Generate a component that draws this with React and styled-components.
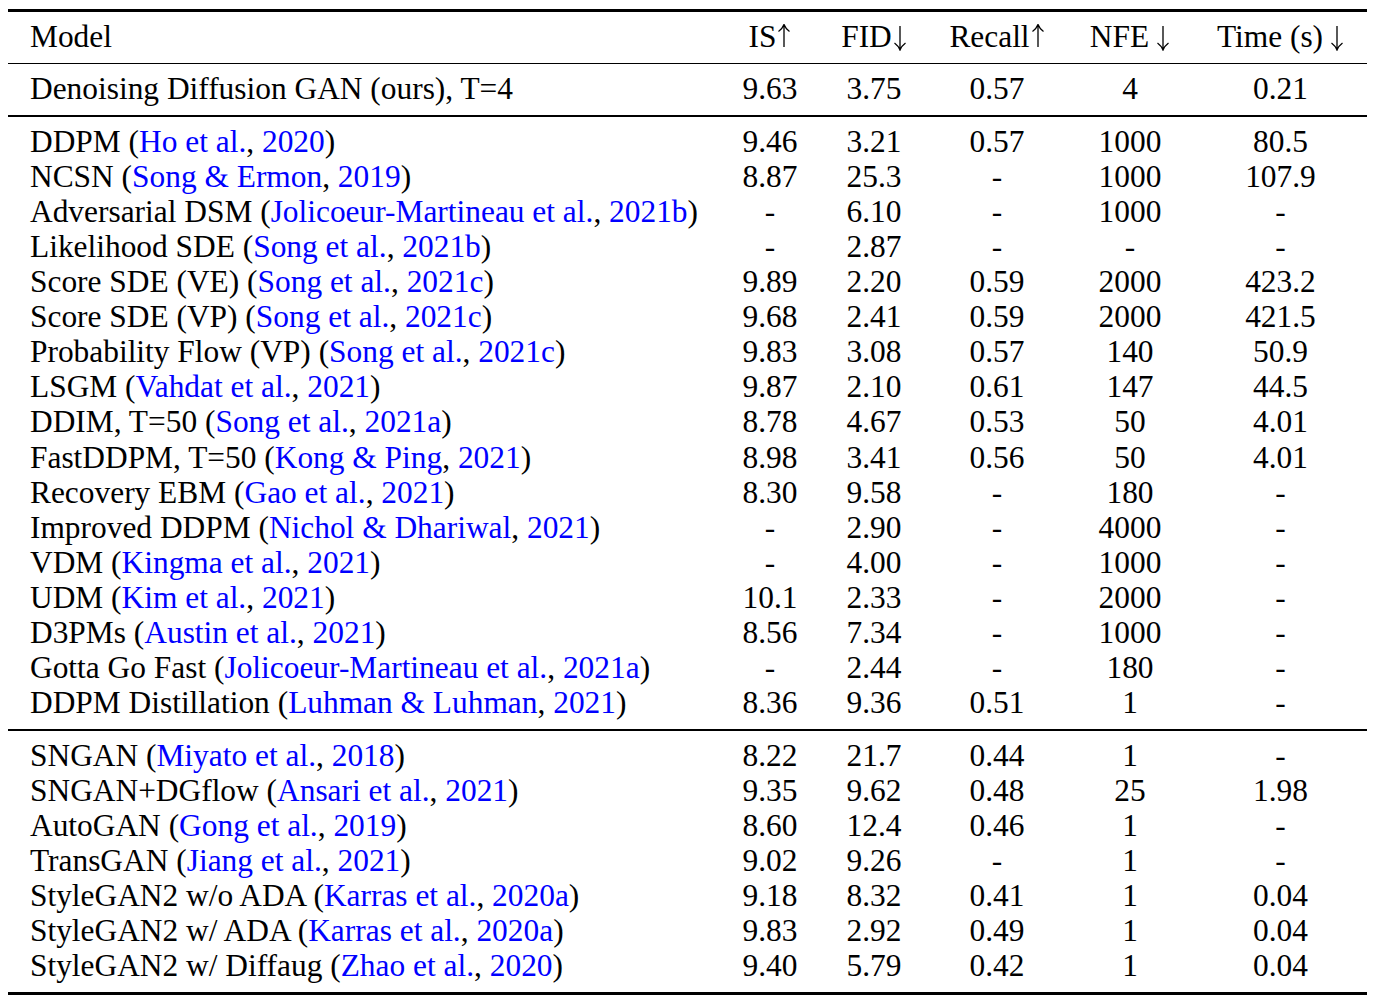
import React from 'react';
import styled, { createGlobalStyle } from 'styled-components';

const GlobalStyle = createGlobalStyle`
  body {
    margin: 0;
    background: #ffffff;
  }
`;

const Page = styled.div`
  padding: 9px 13px 0 8px;
  font-family: "Liberation Serif", "Times New Roman", serif;
  font-size: 31.4px;
  color: #000000;
`;

const Table = styled.div`
  width: 1359px;
`;

const Rule = styled.div`
  height: ${props => (props.$thick ? '2.5px' : '1.5px')};
  background: #000000;
`;

const Section = styled.div`
  padding: 7px 0 9px;
`;

const Row = styled.div`
  display: grid;
  grid-template-columns: 712px 100px 108px 138px 128px 173px;
  height: 35.1px;
  line-height: 35.1px;
  white-space: nowrap;
`;

const ModelCell = styled.div`
  padding-left: 22px;
`;

const NumCell = styled.div`
  text-align: center;
`;

const Link = styled.span`
  color: #0000ff;
`;

const ArrowSvg = styled.svg`
  width: 14px;
  height: ${props => (props.$down ? '25px' : '23px')};
  vertical-align: ${props => (props.$down ? '-4px' : '0px')};
  margin-left: ${props => (props.$gap ? '7px' : '1px')};
`;

const Arrow = ({ down, gap }) => (
  <ArrowSvg $down={down} $gap={gap} viewBox={down ? '0 0 14 25' : '0 0 14 23'}>
    {down ? (
      <path d="M7 0 V23.5 M1.5 17 Q5.5 20 7 24 Q8.5 20 12.5 17" stroke="#000" strokeWidth="1.3" fill="none" />
    ) : (
      <path d="M7 23 V1 M1.5 7.5 Q5.5 4.5 7 0.5 Q8.5 4.5 12.5 7.5" stroke="#000" strokeWidth="1.3" fill="none" />
    )}
  </ArrowSvg>
);

const header = [
  { label: 'IS', down: false, gap: false },
  { label: 'FID', down: true, gap: false },
  { label: 'Recall', down: false, gap: false },
  { label: 'NFE', down: true, gap: true },
  { label: 'Time (s)', down: true, gap: true },
];

const ours = { name: 'Denoising Diffusion GAN (ours), T=4', vals: ['9.63', '3.75', '0.57', '4', '0.21'] };

const diffusion = [
  { name: 'DDPM', who: 'Ho et al.', year: '2020', vals: ['9.46', '3.21', '0.57', '1000', '80.5'] },
  { name: 'NCSN', who: 'Song & Ermon', year: '2019', vals: ['8.87', '25.3', '-', '1000', '107.9'] },
  { name: 'Adversarial DSM', who: 'Jolicoeur-Martineau et al.', year: '2021b', vals: ['-', '6.10', '-', '1000', '-'] },
  { name: 'Likelihood SDE', who: 'Song et al.', year: '2021b', vals: ['-', '2.87', '-', '-', '-'] },
  { name: 'Score SDE (VE)', who: 'Song et al.', year: '2021c', vals: ['9.89', '2.20', '0.59', '2000', '423.2'] },
  { name: 'Score SDE (VP)', who: 'Song et al.', year: '2021c', vals: ['9.68', '2.41', '0.59', '2000', '421.5'] },
  { name: 'Probability Flow (VP)', who: 'Song et al.', year: '2021c', vals: ['9.83', '3.08', '0.57', '140', '50.9'] },
  { name: 'LSGM', who: 'Vahdat et al.', year: '2021', vals: ['9.87', '2.10', '0.61', '147', '44.5'] },
  { name: 'DDIM, T=50', who: 'Song et al.', year: '2021a', vals: ['8.78', '4.67', '0.53', '50', '4.01'] },
  { name: 'FastDDPM, T=50', who: 'Kong & Ping', year: '2021', vals: ['8.98', '3.41', '0.56', '50', '4.01'] },
  { name: 'Recovery EBM', who: 'Gao et al.', year: '2021', vals: ['8.30', '9.58', '-', '180', '-'] },
  { name: 'Improved DDPM', who: 'Nichol & Dhariwal', year: '2021', vals: ['-', '2.90', '-', '4000', '-'] },
  { name: 'VDM', who: 'Kingma et al.', year: '2021', vals: ['-', '4.00', '-', '1000', '-'] },
  { name: 'UDM', who: 'Kim et al.', year: '2021', vals: ['10.1', '2.33', '-', '2000', '-'] },
  { name: 'D3PMs', who: 'Austin et al.', year: '2021', vals: ['8.56', '7.34', '-', '1000', '-'] },
  { name: 'Gotta Go Fast', who: 'Jolicoeur-Martineau et al.', year: '2021a', vals: ['-', '2.44', '-', '180', '-'] },
  { name: 'DDPM Distillation', who: 'Luhman & Luhman', year: '2021', vals: ['8.36', '9.36', '0.51', '1', '-'] },
];

const gans = [
  { name: 'SNGAN', who: 'Miyato et al.', year: '2018', vals: ['8.22', '21.7', '0.44', '1', '-'] },
  { name: 'SNGAN+DGflow', who: 'Ansari et al.', year: '2021', vals: ['9.35', '9.62', '0.48', '25', '1.98'] },
  { name: 'AutoGAN', who: 'Gong et al.', year: '2019', vals: ['8.60', '12.4', '0.46', '1', '-'] },
  { name: 'TransGAN', who: 'Jiang et al.', year: '2021', vals: ['9.02', '9.26', '-', '1', '-'] },
  { name: 'StyleGAN2 w/o ADA', who: 'Karras et al.', year: '2020a', vals: ['9.18', '8.32', '0.41', '1', '0.04'] },
  { name: 'StyleGAN2 w/ ADA', who: 'Karras et al.', year: '2020a', vals: ['9.83', '2.92', '0.49', '1', '0.04'] },
  { name: 'StyleGAN2 w/ Diffaug', who: 'Zhao et al.', year: '2020', vals: ['9.40', '5.79', '0.42', '1', '0.04'] },
];

const ResultRow = ({ row }) => (
  <Row>
    <ModelCell>
      {row.name}
      {row.who && (
        <>
          {' ('}
          <Link>{row.who}</Link>
          {', '}
          <Link>{row.year}</Link>
          {')'}
        </>
      )}
    </ModelCell>
    {row.vals.map((v, i) => (
      <NumCell key={i}>{v}</NumCell>
    ))}
  </Row>
);

export default function App() {
  return (
    <>
      <GlobalStyle />
      <Page>
        <Table>
          <Rule $thick />
          <Section>
            <Row>
              <ModelCell>Model</ModelCell>
              {header.map(h => (
                <NumCell key={h.label}>
                  {h.label}
                  <Arrow down={h.down} gap={h.gap} />
                </NumCell>
              ))}
            </Row>
          </Section>
          <Rule />
          <Section>
            <ResultRow row={ours} />
          </Section>
          <Rule />
          <Section>
            {diffusion.map((r, i) => (
              <ResultRow key={i} row={r} />
            ))}
          </Section>
          <Rule />
          <Section>
            {gans.map((r, i) => (
              <ResultRow key={i} row={r} />
            ))}
          </Section>
          <Rule $thick />
        </Table>
      </Page>
    </>
  );
}
